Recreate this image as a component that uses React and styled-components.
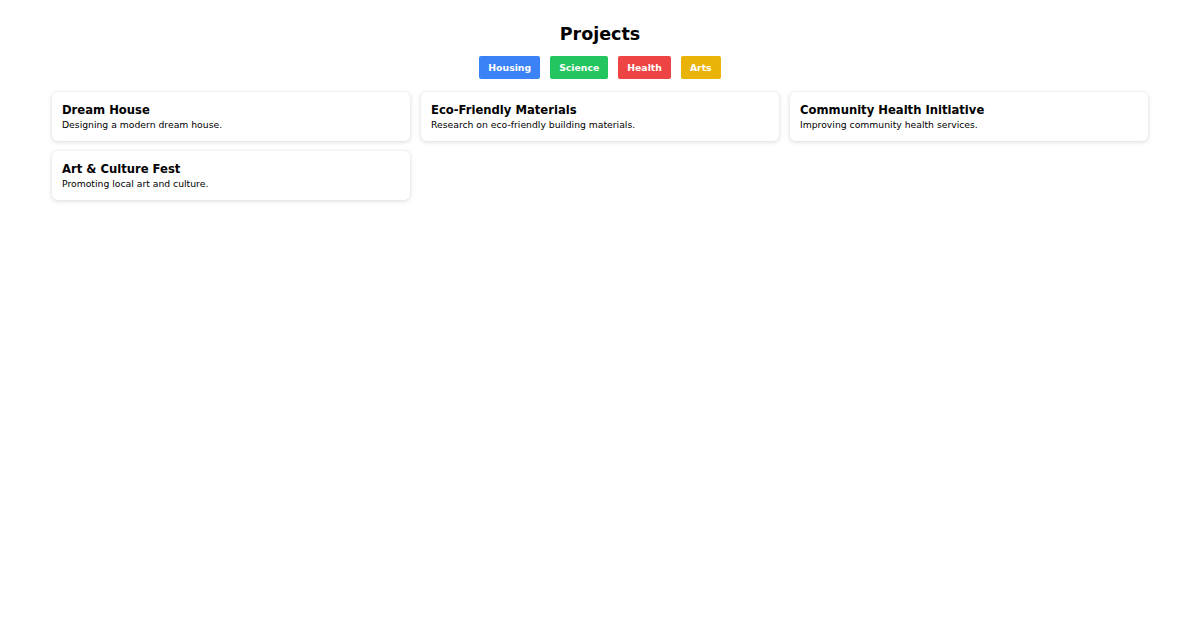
import React from 'react';
import styled, { createGlobalStyle } from 'styled-components';

const GlobalStyle = createGlobalStyle`
  body {
    margin: 0;
    background: #fff;
    font-family: "DejaVu Sans", sans-serif;
    color: #000;
  }
`;

const Page = styled.div`
  padding: 22px 52px;
`;

const Title = styled.h1`
  margin: 0;
  text-align: center;
  font-size: 17.5px;
  font-weight: bold;
  line-height: 24px;
`;

const FilterBar = styled.div`
  display: flex;
  justify-content: center;
  gap: 10px;
  margin: 10px 0 13px;
`;

const FilterButton = styled.button`
  border: none;
  border-radius: 2px;
  padding: 0 9px;
  height: 23px;
  font-family: inherit;
  font-size: 9.3px;
  font-weight: bold;
  color: #fff;
  background: ${(p) => p.color};
  cursor: pointer;
`;

const Grid = styled.div`
  display: grid;
  grid-template-columns: repeat(3, 1fr);
  gap: 10px 11px;
`;

const Card = styled.div`
  background: #fff;
  border-radius: 5px;
  box-shadow: 0 1px 5px rgba(0, 0, 0, 0.14), 0 0 1px rgba(0, 0, 0, 0.12);
  padding: 11px 10px 10px;
`;

const CardTitle = styled.h3`
  margin: 0;
  font-size: 11.6px;
  font-weight: bold;
  line-height: 15px;
`;

const CardText = styled.p`
  margin: 0;
  font-size: 9.25px;
  line-height: 13px;
`;

const categories = [
  { name: 'Housing', color: '#3b82f6' },
  { name: 'Science', color: '#22c55e' },
  { name: 'Health', color: '#ef4444' },
  { name: 'Arts', color: '#eab308' },
];

const projects = [
  { title: 'Dream House', text: 'Designing a modern dream house.' },
  { title: 'Eco-Friendly Materials', text: 'Research on eco-friendly building materials.' },
  { title: 'Community Health Initiative', text: 'Improving community health services.' },
  { title: 'Art & Culture Fest', text: 'Promoting local art and culture.' },
];

const App = () => {
  return (
    <>
      <GlobalStyle />
      <Page>
        <Title>Projects</Title>
        <FilterBar>
          {categories.map((c) => (
            <FilterButton key={c.name} color={c.color}>
              {c.name}
            </FilterButton>
          ))}
        </FilterBar>
        <Grid>
          {projects.map((p) => (
            <Card key={p.title}>
              <CardTitle>{p.title}</CardTitle>
              <CardText>{p.text}</CardText>
            </Card>
          ))}
        </Grid>
      </Page>
    </>
  );
};

export default App;
